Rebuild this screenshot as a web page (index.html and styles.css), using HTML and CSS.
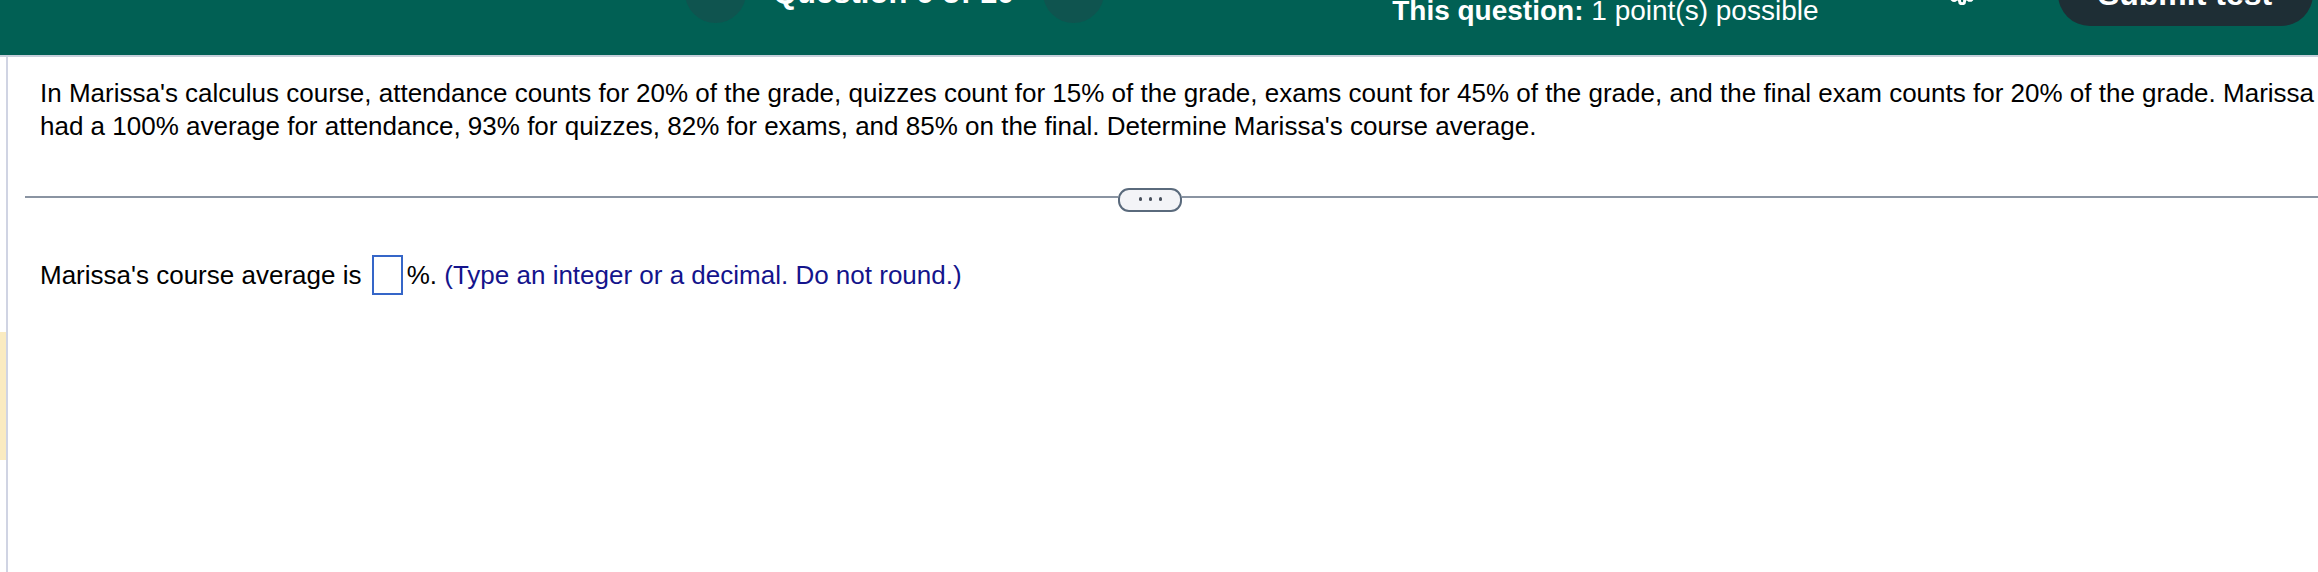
FILE: index.html
```html
<!DOCTYPE html>
<html lang="en">
<head>
<meta charset="utf-8">
<title>Question 6 of 10</title>
<link rel="stylesheet" href="styles.css">
</head>
<body>
<header class="topbar">
  <div class="nav">
    <button class="nav-circle" aria-label="Previous question"></button>
    <div class="nav-title">Question 6 of 10</div>
    <button class="nav-circle" aria-label="Next question"></button>
  </div>
  <div class="points"><b>This question:</b> 1 point(s) possible</div>
  <div class="gear" aria-hidden="true">
    <svg width="30" height="30" viewBox="0 0 24 24" fill="none" stroke="#ffffff" stroke-width="2.4" stroke-linecap="round" stroke-linejoin="round">
      <circle cx="12" cy="12" r="3"/>
      <path d="M19.4 15a1.65 1.65 0 0 0 .33 1.820l.06.06a2 2 0 1 1-2.830 2.830l-.06-.06a1.65 1.65 0 0 0-1.820-.33 1.65 1.65 0 0 0-1 1.510V21a2 2 0 0 1-4 0v-.09A1.65 1.65 0 0 0 9 19.4a1.65 1.65 0 0 0-1.820.33l-.06.06a2 2 0 1 1-2.830-2.830l.06-.06A1.65 1.65 0 0 0 4.68 15a1.65 1.65 0 0 0-1.510-1H3a2 2 0 0 1 0-4h.09A1.650 1.650 0 0 0 4.6 9a1.65 1.65 0 0 0-.33-1.820l-.06-.06a2 2 0 1 1 2.830-2.830l.06.06A1.65 1.65 0 0 0 9 4.68a1.65 1.65 0 0 0 1-1.510V3a2 2 0 0 1 4 0v.09a1.65 1.65 0 0 0 1 1.510 1.65 1.65 0 0 0 1.820-.33l.06-.06a2 2 0 1 1 2.830 2.830l-.06.06A1.65 1.65 0 0 0 19.4 9a1.65 1.65 0 0 0 1.510 1H21a2 2 0 0 1 0 4h-.09a1.65 1.65 0 0 0-1.510 1z"/>
    </svg>
  </div>
  <button class="submit">Submit test</button>
</header>
<div class="strip"></div>
<main class="page">
  <div class="flag"></div>
  <section class="content">
    <p class="question">In Marissa's calculus course, attendance counts for 20% of the grade, quizzes count for 15% of the grade, exams count for 45% of the grade, and the final exam counts for 20% of the grade. Marissa had a 100% average for attendance, 93% for quizzes, 82% for exams, and 85% on the final. Determine Marissa's course average.</p>
    <div class="divider">
      <span class="rule rule-left"></span>
      <button class="more" aria-label="Show more"><i></i><i></i><i></i></button>
      <span class="rule rule-right"></span>
    </div>
    <p class="answer">Marissa's course average is <span class="blank"></span>%. <span class="hint">(Type an integer or a decimal. Do not round.)</span></p>
  </section>
</main>
</body>
</html>
```
FILE: styles.css
```css
html, body {
  margin: 0;
  padding: 0;
  background: #ffffff;
}
body {
  width: 2318px;
  height: 572px;
  overflow: hidden;
  font-family: "Liberation Sans", Arial, Helvetica, sans-serif;
  color: #000000;
}
.topbar {
  height: 55px;
  background: #016054;
  display: flex;
  align-items: flex-start;
  overflow: hidden;
  color: #ffffff;
}
.nav {
  display: flex;
  align-items: flex-start;
  margin-left: 685px;
}
.nav-circle {
  width: 61px;
  height: 61px;
  border-radius: 50%;
  border: none;
  background: #0f544f;
  margin-top: -38px;
  padding: 0;
}
.nav-title {
  font-weight: bold;
  font-size: 31px;
  line-height: 1;
  margin: -23px 29px 0 27px;
  white-space: nowrap;
}
.points {
  font-size: 28px;
  line-height: 1;
  margin: -3px 0 0 288px;
  white-space: nowrap;
}
.points b {
  font-weight: bold;
}
.gear {
  margin: -25px 0 0 128px;
  width: 30px;
  height: 30px;
}
.gear svg {
  display: block;
}
.submit {
  margin: -38px 0 0 81px;
  width: 255px;
  height: 64px;
  border: none;
  border-radius: 32px;
  background: #1e2e35;
  color: #ffffff;
  font-family: "Liberation Sans", Arial, sans-serif;
  font-weight: bold;
  font-size: 32px;
  line-height: 1;
  padding: 0;
}
.strip {
  height: 2px;
  background: #c6cfdb;
}
.page {
  display: flex;
  min-height: 515px;
}
.flag {
  width: 6px;
  flex: none;
  background: linear-gradient(#ffffff 0, #ffffff 275px, #faebc1 275px, #faebc1 403px, #ffffff 403px);
}
.content {
  flex: 1;
  border-left: 2px solid #d0d4e3;
  padding: 0 0 0 17px;
}
.question {
  margin: 20px 0 0 15px;
  font-size: 26px;
  line-height: 32.5px;
}
.divider {
  display: flex;
  align-items: flex-start;
  margin-top: 46px;
}
.rule {
  height: 2px;
  background: #8a94a2;
  margin-top: 8px;
}
.rule-left {
  width: 1093px;
}
.rule-right {
  flex: 1;
}
.more {
  width: 64px;
  height: 24px;
  box-sizing: border-box;
  border: 2px solid #5a6a7c;
  border-radius: 11px;
  background: #f3f4f7;
  display: flex;
  align-items: flex-start;
  justify-content: center;
  gap: 7px;
  padding: 7px 0 0;
}
.more i {
  display: block;
  width: 3px;
  height: 4px;
  border-radius: 2px;
  background: #48505c;
}
.answer {
  margin: 43px 0 0 15px;
  font-size: 26px;
  line-height: 40px;
}
.blank {
  display: inline-block;
  vertical-align: middle;
  width: 31px;
  height: 40px;
  box-sizing: border-box;
  border: 2px solid #3566c8;
  margin: -4px 4px 0 3px;
}
.hint {
  color: #14148c;
}
```
